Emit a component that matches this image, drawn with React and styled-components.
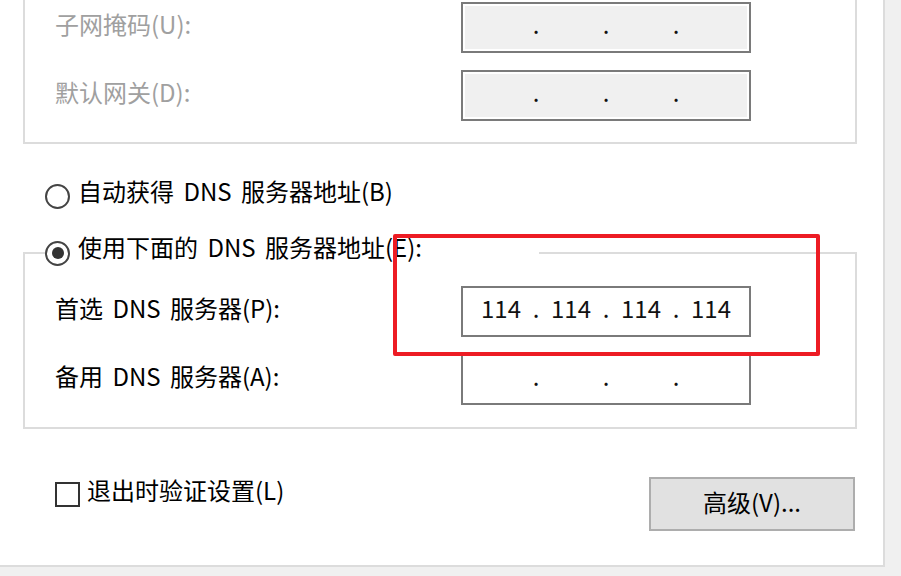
import React from "react";
import styled, { createGlobalStyle } from "styled-components";

const Global = createGlobalStyle`
  html, body { margin: 0; padding: 0; background: #f0f0f0; }
  body { font-family: "Noto Sans CJK SC", "Microsoft YaHei", sans-serif; color: #000; }
  * { box-sizing: border-box; }
`;

const Panel = styled.div`
  position: relative;
  width: 885px;
  height: 567px;
  background: #fff;
  border-right: 2px solid #dcdcdc;
  border-bottom: 2px solid #dcdcdc;
  padding: 0 26px 0 23px;
  display: flex;
  flex-direction: column;
  overflow: hidden;
`;

const TopGroup = styled.div`
  border: 2px solid #dcdcdc;
  border-top: none;
  padding: 2px 104px 21px 30px;
  display: flex;
  flex-direction: column;
  gap: 17px;
`;

const Group = styled.fieldset`
  margin: 28px 0 0;
  min-width: 0;
  border: 2px solid #dcdcdc;
  padding: 18px 104px 22px 30px;
  display: flex;
  flex-direction: column;
  gap: 17px;
`;

const Legend = styled.legend`
  padding: 0;
  margin-left: -10px;
  width: 494px;
  height: 30px;
  display: flex;
  align-items: center;
  gap: 8px;
  background: #fff;
`;

const FieldRow = styled.div`
  display: grid;
  grid-template-columns: 1fr 290px;
  align-items: center;
  height: 51px;
`;

const Label = styled.span`
  font-size: 24px;
  line-height: 30px;
  padding-bottom: ${(p) => (p.$lift ? 12 : 8)}px;
  word-spacing: 4px;
  white-space: nowrap;
  color: ${(p) => (p.$disabled ? "#a0a0a0" : "#000")};
`;

const IpBox = styled.div`
  width: 290px;
  height: 51px;
  border: 2px solid #7a7a7a;
  background: ${(p) => (p.$disabled ? "#f0f0f0" : "#fff")};
  box-shadow: ${(p) => (p.$disabled ? "inset 0 0 0 2px #fff" : "none")};
  display: flex;
  justify-content: center;
  align-items: center;
  padding-bottom: 8px;
  font-size: 24px;
  line-height: 30px;
  color: #111;
`;

const IpPart = styled.span`
  width: 56px;
  text-align: center;
`;

const IpDot = styled.span`
  width: 14px;
  text-align: center;
`;

const RadioRow = styled.label`
  display: flex;
  align-items: center;
  gap: 8px;
  height: 30px;
  margin: 36px 0 0 22px;
`;

const RadioCircle = styled.span`
  width: 25px;
  height: 25px;
  flex: none;
  border-radius: 50%;
  border: 2px solid #444;
  display: flex;
  align-items: center;
  justify-content: center;
  margin-top: ${(p) => (p.$checked ? 0 : 3)}px;
  &::after {
    content: "";
    width: 12px;
    height: 12px;
    border-radius: 50%;
    background: #333;
    display: ${(p) => (p.$checked ? "block" : "none")};
  }
`;

const BottomRow = styled.div`
  display: flex;
  justify-content: space-between;
  align-items: flex-start;
  margin-top: 48px;
  padding: 0 2px 0 32px;
`;

const CheckRow = styled.label`
  display: flex;
  align-items: center;
  gap: 7px;
  margin-top: -2px;
  height: 38px;
`;

const CheckBox = styled.span`
  width: 25px;
  height: 25px;
  flex: none;
  border: 2px solid #333;
  background: #fff;
`;

const Button = styled.button`
  width: 206px;
  height: 54px;
  border: 2px solid #adadad;
  background: #e1e1e1;
  font-family: inherit;
  font-size: 24px;
  line-height: 30px;
  color: #000;
  padding: 0 0 4px;
`;

const Annotation = styled.div`
  position: absolute;
  left: 393px;
  top: 234px;
  width: 427px;
  height: 122px;
  border: 4px solid #ed1c24;
  border-radius: 2px;
  pointer-events: none;
`;

function IpField({ value, disabled }) {
  const parts = value ? value.split(".") : ["", "", "", ""];
  return (
    <IpBox $disabled={disabled}>
      {parts.map((p, i) => (
        <React.Fragment key={i}>
          {i > 0 && <IpDot>.</IpDot>}
          <IpPart>{p}</IpPart>
        </React.Fragment>
      ))}
    </IpBox>
  );
}

export default function App() {
  return (
    <>
      <Global />
      <Panel>
        <TopGroup>
          <FieldRow>
            <Label $disabled>子网掩码(U):</Label>
            <IpField disabled />
          </FieldRow>
          <FieldRow>
            <Label $disabled>默认网关(D):</Label>
            <IpField disabled />
          </FieldRow>
        </TopGroup>

        <RadioRow>
          <RadioCircle />
          <Label>自动获得 DNS 服务器地址(B)</Label>
        </RadioRow>

        <Group>
          <Legend>
            <RadioCircle $checked />
            <Label $lift>使用下面的 DNS 服务器地址(E):</Label>
          </Legend>
          <FieldRow>
            <Label>首选 DNS 服务器(P):</Label>
            <IpField value="114.114.114.114" />
          </FieldRow>
          <FieldRow>
            <Label>备用 DNS 服务器(A):</Label>
            <IpField />
          </FieldRow>
        </Group>

        <BottomRow>
          <CheckRow>
            <CheckBox />
            <Label>退出时验证设置(L)</Label>
          </CheckRow>
          <Button>高级(V)...</Button>
        </BottomRow>

        <Annotation />
      </Panel>
    </>
  );
}
